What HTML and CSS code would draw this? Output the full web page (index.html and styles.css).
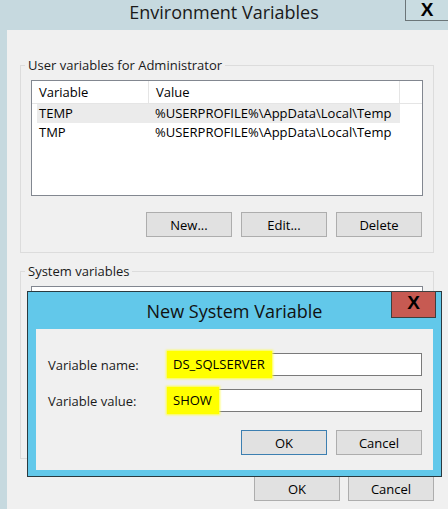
FILE: index.html
```html
<!DOCTYPE html>
<html lang="en">
<head>
    <meta charset="UTF-8">
    <meta name="viewport" content="width=device-width, initial-scale=1.0">
    <title>Environment Variables</title>
    <link rel="stylesheet" href="styles.css">
</head>
<body>
    <div class="window">
        <div class="titlebar">
            <span class="title">Environment Variables</span>
            <span class="close-btn">X</span>
        </div>

        <div class="client">
            <fieldset class="group">
                <legend>User variables for Administrator</legend>
                <div class="listview">
                    <div class="lv-header">
                        <div class="col-var">Variable</div>
                        <div class="col-val">Value</div>
                        <div class="col-fill"></div>
                    </div>
                    <div class="lv-row selected">
                        <div class="col-var">TEMP</div>
                        <div class="col-val">%USERPROFILE%\AppData\Local\Temp</div>
                    </div>
                    <div class="lv-row">
                        <div class="col-var">TMP</div>
                        <div class="col-val">%USERPROFILE%\AppData\Local\Temp</div>
                    </div>
                </div>
                <div class="btn-row">
                    <button class="btn">New...</button>
                    <button class="btn">Edit...</button>
                    <button class="btn">Delete</button>
                </div>
            </fieldset>

            <fieldset class="group">
                <legend>System variables</legend>
                <div class="listview"></div>
                <div class="btn-row empty"></div>
            </fieldset>

            <div class="btn-row footer">
                <button class="btn">OK</button>
                <button class="btn">Cancel</button>
            </div>
        </div>

        <!-- modal dialog on top of the main window -->
        <div class="dialog">
            <div class="dialog-titlebar">
                <span class="dialog-title">New System Variable</span>
                <span class="dialog-close">X</span>
            </div>
            <div class="dialog-body">
                <div class="field-row">
                    <label>Variable name:</label>
                    <div class="textbox"><span class="mark">DS_SQLSERVER</span></div>
                </div>
                <div class="field-row">
                    <label>Variable value:</label>
                    <div class="textbox"><span class="mark">SHOW</span></div>
                </div>
                <div class="btn-row dialog-buttons">
                    <button class="btn default">OK</button>
                    <button class="btn">Cancel</button>
                </div>
            </div>
        </div>
    </div>
</body>
</html>
```

FILE: styles.css
```css
* {
    box-sizing: border-box;
}

body {
    margin: 0;
    font-family: "Open Sans", "Noto Sans", sans-serif;
    font-size: 13px;
    color: #000;
}

.window {
    position: relative;
    width: 448px;
    height: 509px;
    overflow: hidden;
    background-color: #c6d9df;
}

.titlebar {
    position: relative;
    height: 30px;
    text-align: center;
}

.title {
    font-size: 18px;
    line-height: 24px;
    color: #1a1a1a;
}

.close-btn {
    position: absolute;
    top: -1px;
    right: -1px;
    width: 44px;
    height: 22px;
    border: 1px solid #6b7578;
    background-color: #c9dce1;
    font-family: "Liberation Sans", sans-serif;
    font-size: 19px;
    font-weight: bold;
    line-height: 20px;
    text-align: center;
}

.client {
    height: 479px;
    margin-left: 7px;
    padding: 27px 14px 0 13px;
    background-color: #f0f0f0;
}

.group {
    margin: 0;
    padding: 7px 10px 15px 10px;
    border: 1px solid #dcdcdc;
}

.group + .group {
    margin-top: 10px;
}

.group legend {
    margin-left: -6px;
    padding: 0 3px;
    line-height: 16px;
    color: #1a1a1a;
}

.listview {
    height: 116px;
    border: 1px solid #828790;
    background-color: #fff;
}

.lv-header {
    display: flex;
    height: 23px;
    border-bottom: 1px solid #e5e5e5;
}

.lv-header > div {
    padding-left: 7px;
    line-height: 22px;
    border-right: 1px solid #e5e5e5;
}

.lv-header .col-fill {
    flex: 1;
    border-right: none;
}

.col-var {
    width: 117px;
}

.col-val {
    width: 251px;
}

.lv-row {
    display: flex;
    height: 19px;
    margin-left: 5px;
    width: 363px;
    line-height: 19px;
}

.lv-row .col-var {
    width: 112px;
    padding-left: 2px;
}

.lv-row .col-val {
    padding-left: 6px;
}

.lv-row.selected {
    background-color: #ebebeb;
}

.btn-row {
    display: flex;
    justify-content: flex-end;
    gap: 9px;
    margin-top: 16px;
    padding-right: 1px;
}

.btn-row.empty {
    height: 25px;
}

.btn {
    width: 86px;
    height: 25px;
    padding: 0;
    border: 1px solid #adadad;
    background-color: #e1e1e1;
    font-family: inherit;
    font-size: inherit;
    color: #000;
}

.btn.default {
    border-color: #3c7fb1;
}

.footer {
    margin-top: 17px;
    gap: 8px;
    padding-right: 0;
}

.dialog {
    position: absolute;
    left: 27px;
    top: 291px;
    width: 415px;
    height: 186px;
    padding: 0 8px 6px 8px;
    border: 1px solid #2a3a40;
    background-color: #62c8ea;
    display: flex;
    flex-direction: column;
}

.dialog-titlebar {
    position: relative;
    height: 37px;
    flex: none;
    text-align: center;
}

.dialog-title {
    font-size: 18px;
    line-height: 38px;
    color: #111;
}

.dialog-close {
    position: absolute;
    top: -1px;
    right: -3px;
    width: 45px;
    height: 27px;
    border: 1px solid #3f3f3f;
    background-color: #c75a52;
    font-family: "Liberation Sans", sans-serif;
    font-size: 19px;
    font-weight: bold;
    line-height: 22px;
    text-align: center;
}

.dialog-body {
    flex: 1;
    padding: 24px 11px 0 12px;
    background-color: #f0f0f0;
}

.field-row {
    display: flex;
    align-items: center;
    justify-content: space-between;
    margin-bottom: 13px;
}

.field-row label {
    color: #1a1a1a;
}

.textbox {
    display: flex;
    width: 254px;
    height: 23px;
    border: 1px solid #7a7a7a;
    background-color: #fff;
}

.mark {
    height: 27px;
    margin: -3px 0 0 -2px;
    padding: 0 7px 0 6px;
    line-height: 27px;
    background-color: #ffff00;
    box-shadow: 0 0 2px 1px #ffff40;
}

.dialog-buttons {
    margin-top: 18px;
    padding-right: 0;
}
```
